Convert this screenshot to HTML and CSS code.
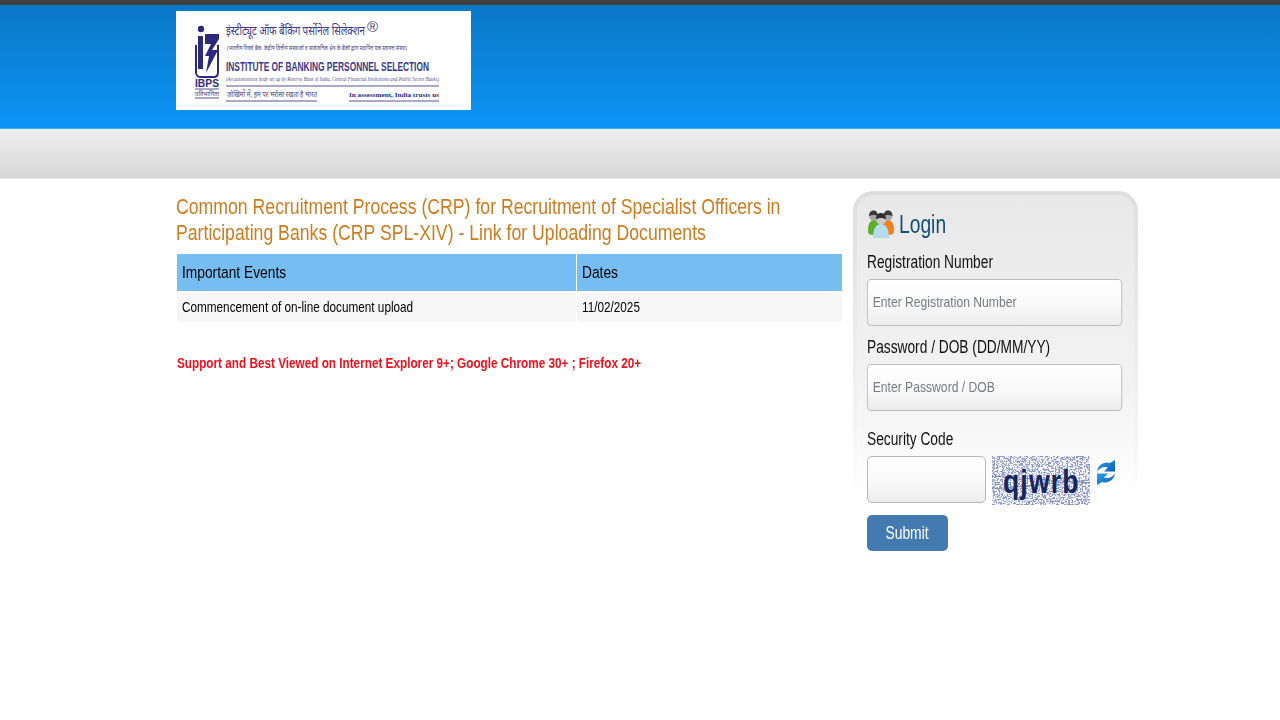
FILE: index.html
```html
<!DOCTYPE html>
<html lang="en">
<head>
    <meta charset="UTF-8" />
    <meta name="viewport" content="width=device-width, initial-scale=1.0"/>
    <title>CRP SPL-XIV</title>
    <link rel="stylesheet" href="styles.css">
</head>
<body>
    <div class="topbar"></div>
    <div class="header">
        <div class="logo">
            <svg width="295" height="99" viewBox="0 0 295 99">
                <g fill="#2c2a7c">
                    <circle cx="25" cy="18" r="3.2"/>
                    <path d="M22 25h5v33h-5z"/>
                    <path d="M29 23h14v5l-7 11h6L30 62l3-17h-4l6-12h-6z"/>
                </g>
                <path d="M20 34v27c0 3 2 5 4 5h14c3 0 4-2 4-5V34" fill="none" stroke="#2c2a7c" stroke-width="2"/>
                <text x="19" y="76" class="logo-ibps" textLength="24" lengthAdjust="spacingAndGlyphs">IBPS</text>
                <path d="M19 78h24M19 87h24" stroke="#55539a" stroke-width="1"/>
                <text x="19" y="85" class="logo-hi-small" textLength="24" lengthAdjust="spacingAndGlyphs">प्रतिभागिता</text>
                <g transform="scale(.7 1)">
                    <text x="71.400" y="24" class="logo-hi" textLength="198.600" lengthAdjust="spacingAndGlyphs">इंस्टीट्यूट ऑफ बैंकिंग पर्सोनेल सिलेक्शन</text>
                </g>
                <text x="191" y="21" class="logo-reg">®</text>
                <text x="51" y="39" class="logo-fine" textLength="180" lengthAdjust="spacingAndGlyphs">(भारतीय रिजर्व बैंक, केंद्रीय वित्तीय संस्थाओं व सार्वजनिक क्षेत्र के बैंकों द्वारा स्थापित एक स्वायत्त संस्था)</text>
                <text x="50" y="60" class="logo-name" textLength="203" lengthAdjust="spacingAndGlyphs">INSTITUTE OF BANKING PERSONNEL SELECTION</text>
                <text x="50" y="70" class="logo-fine-en" textLength="213" lengthAdjust="spacingAndGlyphs">(An autonomous body set up by Reserve Bank of India, Central Financial Institutions and Public Sector Banks)</text>
                <path d="M50 75h213" stroke="#8f8db8" stroke-width="1.5"/>
                <text x="51" y="86" class="logo-hi-line" textLength="90" lengthAdjust="spacingAndGlyphs">जोखिमों में, हम पर भरोसा रखता है भारत</text>
                <path d="M50 90h91" stroke="#8f8db8" stroke-width="1.5"/>
                <text x="173" y="86" class="logo-motto" textLength="90" lengthAdjust="spacingAndGlyphs">In assessment, India trusts us</text>
                <path d="M173 90h90" stroke="#8f8db8" stroke-width="1.5"/>
            </svg>
        </div>
    </div>
    <div class="subbar"></div>

    <div class="page">
        <div class="content">
            <h1 class="title">
                <span class="squeeze">Common Recruitment Process (CRP) for Recruitment of Specialist Officers in</span>
                <span class="squeeze">Participating Banks (CRP SPL-XIV) - Link for Uploading Documents</span>
            </h1>
            <table class="events">
                <tr>
                    <th class="col-event"><span class="squeeze">Important Events</span></th>
                    <th><span class="squeeze">Dates</span></th>
                </tr>
                <tr>
                    <td><span class="squeeze">Commencement of on-line document upload</span></td>
                    <td><span class="squeeze">11/02/2025</span></td>
                </tr>
            </table>
            <p class="support"><span class="squeeze">Support and Best Viewed on Internet Explorer 9+; Google Chrome 30+ ; Firefox 20+</span></p>
        </div>

        <div class="login-edge">
        <form class="login">
            <h2 class="login-title">
                <svg width="28" height="28" viewBox="0 0 28 28">
                    <path d="M1 21c0-7 2-11 6-11s6 4 6 11c0 3-2 4-6 4s-6-1-6-4z" fill="#5cae2e"/>
                    <path d="M15 21c0-7 2-11 6-11s6 4 6 11c0 3-2 4-6 4s-6-1-6-4z" fill="#ef8120"/>
                    <circle cx="6.500" cy="6" r="4.500" fill="#a8a8a8"/>
                    <circle cx="21" cy="6" r="4.500" fill="#a8a8a8"/>
                    <path d="M2 6c0-3.500 2-5.500 4.500-5.500S11 2.500 11 6C8 4.500 5 4.500 2 6zM16.500 6c0-3.500 2-5.500 4.500-5.500s4.500 2 4.500 5.500c-3-1.500-6-1.500-9 0z" fill="#3a3a3a"/>
                    <path d="M6 28c0-9 3-14 8-14s8 5 8 14z" fill="#b5dcea"/>
                    <circle cx="14" cy="9.500" r="5" fill="#c9c9c9"/>
                    <path d="M9 9.500c0-4 2-6.500 5-6.500s5 2.500 5 6.500c-3-2-7-2-10 0z" fill="#2e2e2e"/>
                </svg>
                <span class="squeeze">Login</span>
            </h2>
            <label class="field-label"><span class="squeeze">Registration Number</span></label>
            <input class="field field-wide" type="text" placeholder="Enter Registration Number" />
            <label class="field-label second"><span class="squeeze">Password / DOB (DD/MM/YY)</span></label>
            <input class="field field-wide" type="text" placeholder="Enter Password / DOB" />
            <label class="field-label third"><span class="squeeze">Security Code</span></label>
            <div class="captcha-row">
                <input class="field captcha-input" type="text" />
                <svg class="captcha" width="98" height="49" viewBox="0 0 98 49">
                    <filter id="speckle" x="0" y="0" width="100%" height="100%">
                        <feTurbulence type="fractalNoise" baseFrequency="0.6" numOctaves="3" seed="11"/>
                        <feColorMatrix values="0 0 0 0 0.26  0 0 0 0 0.31  0 0 0 0 0.56  6 6 0 0 -5.700"/>
                    </filter>
                    <rect width="98" height="49" fill="#f7f8fb"/>
                    <rect width="98" height="49" filter="url(#speckle)"/>
                    <path d="M0 20L98 27M0 33L98 24" stroke="#5a639a" stroke-width="1" opacity=".6"/>
                    <g transform="scale(.78 1)">
                        <text x="14" y="37" class="captcha-text" textLength="97" lengthAdjust="spacing">qjwrb</text>
                    </g>
                </svg>
                <svg class="refresh" width="20" height="25" viewBox="0 0 20 25">
                    <defs>
                        <linearGradient id="arrow-a" x1="0" y1="0" x2="1" y2="1">
                            <stop offset="0" stop-color="#2f9fe8"/>
                            <stop offset="1" stop-color="#0a5fb4"/>
                        </linearGradient>
                    </defs>
                    <path d="M1 11.500C2 5 8 1 14 3l5-3v11.500H8l4-4C8 6 4 7.500 1 11.500z" fill="url(#arrow-a)"/>
                    <path d="M19 13.500c-1 6.500-7 10.500-13 8.500l-5 3V13.500h11l-4 4c4 1.500 8 0 11-4z" fill="url(#arrow-a)"/>
                </svg>
            </div>
            <button class="submit" type="button"><span class="squeeze">Submit</span></button>
        </form>
        </div>
    </div>
</body>
</html>
```

FILE: styles.css
```css
body {
    margin: 0;
    padding: 0;
    background-color: #ffffff;
    font-family: "Liberation Sans", Arial, sans-serif;
    color: #000;
}
.topbar {
    height: 5px;
    background-color: #3f3f3f;
}
.header {
    height: 123px;
    padding-left: 176px;
    background: linear-gradient(#0a78c6, #0b94f6);
    border-bottom: 1px solid #42adf7;
}
.logo {
    width: 295px;
    height: 99px;
    position: relative;
    top: 6px;
    background-color: #fff;
}
.logo svg {
    display: block;
    overflow: visible;
}
.logo-ibps {
    font-size: 10.5px;
    font-weight: bold;
    fill: #2c2a7c;
}
.logo-hi {
    font-family: "Noto Sans", sans-serif;
    font-size: 12px;
    fill: #3a3888;
}
.logo-hi-small, .logo-fine, .logo-hi-line {
    font-family: "Noto Sans", sans-serif;
    font-size: 6px;
    fill: #45437f;
}
.logo-hi-line {
    font-size: 8px;
}
.logo-reg {
    font-size: 15px;
    fill: #45437f;
}
.logo-name {
    font-size: 12px;
    font-weight: bold;
    fill: #3a3888;
}
.logo-fine-en {
    font-family: "Liberation Serif", serif;
    font-size: 6px;
    font-style: italic;
    fill: #55537f;
}
.logo-motto {
    font-family: "Liberation Serif", serif;
    font-size: 7px;
    font-weight: bold;
    fill: #2c2a7c;
}
.subbar {
    height: 49px;
    background: linear-gradient(#efefef, #d7d7d7);
    border-bottom: 1px solid #e6e6e6;
}
.page {
    display: flex;
    gap: 10px;
    margin-left: 176px;
    padding-top: 12px;
}
.content {
    width: 667px;
}
.squeeze {
    display: inline-block;
    white-space: nowrap;
    transform: scaleX(0.81);
    transform-origin: left center;
}
.title {
    margin: 3px 0 8px;
    font-size: 22px;
    font-weight: normal;
    line-height: 26px;
    color: #cf7a1c;
}
.title .squeeze {
    display: block;
    transform: scaleX(0.803);
}
.events {
    width: 666px;
    margin-left: 1px;
    border-collapse: collapse;
}
.events th {
    height: 37px;
    padding: 0 5px;
    background-color: #76bdf1;
    border-right: 1px solid #fff;
    border-bottom: 1px solid #fff;
    font-size: 17px;
    font-weight: normal;
    text-align: left;
}
.events td {
    height: 30px;
    padding: 0 5px;
    background-color: #f6f6f6;
    border-right: 1px solid #fff;
    font-size: 14.5px;
}
.col-event {
    width: 389px;
}
.support {
    margin: 32px 0 0 1px;
    font-size: 14.5px;
    font-weight: bold;
    line-height: 18px;
    color: #f70d1a;
}
.login-edge {
    box-sizing: border-box;
    width: 285px;
    height: 362px;
    padding: 4px 4px 0;
    background: linear-gradient(#dedede, #f6f6f6 70%, #ffffff 84%);
    border-radius: 20px 20px 0 0;
}
.login {
    box-sizing: border-box;
    height: 358px;
    padding: 14px 12px 0 10px;
    background: linear-gradient(#e8e8e8, #f3f3f3 55%, #ffffff 84%);
    border-radius: 16px 16px 0 0;
}
.login-title {
    display: flex;
    align-items: center;
    gap: 4px;
    height: 30px;
    margin: 0 0 13px;
    font-size: 26px;
    font-weight: normal;
    color: #124f78;
}
.login-title .squeeze {
    transform: scaleX(0.74);
}
.field-label {
    display: block;
    height: 27px;
    font-size: 17.5px;
    line-height: 20px;
    color: #111;
}
.field-label .squeeze {
    transform: scaleX(0.785);
}
.second {
    margin-top: 11px;
}
.third {
    margin-top: 18px;
}
.field {
    display: block;
    box-sizing: border-box;
    width: 255px;
    height: 47px;
    padding: 0 5px 2px;
    background: linear-gradient(#ffffff, #f9f9f9 55%, #ececec);
    border: 1px solid #b8b8b8;
    border-radius: 5px;
    font-family: "Liberation Sans", Arial, sans-serif;
    font-size: 15px;
}
.field::placeholder {
    color: #777b80;
    opacity: 1;
}
/* the reference is squeezed sideways, placeholder text included */
.field-wide {
    width: 315px;
    padding: 0 6px 2px;
    transform: scaleX(0.81);
    transform-origin: left center;
}
.captcha-row {
    display: flex;
    align-items: flex-start;
    gap: 6px;
}
.captcha-input {
    width: 119px;
}
.captcha {
    display: block;
    height: 49px;
    overflow: visible;
}
.captcha-text {
    font-size: 34px;
    font-weight: bold;
    fill: #16265e;
}
.refresh {
    display: block;
    margin-top: 4px;
}
.submit {
    display: block;
    width: 81px;
    height: 36px;
    margin-top: 10px;
    padding: 0;
    background-color: #437bb0;
    border: none;
    border-radius: 5px;
    color: #fff;
    font-family: "Liberation Sans", Arial, sans-serif;
    font-size: 18px;
}
.submit .squeeze {
    transform: scaleX(0.77);
    transform-origin: center;
}
```
